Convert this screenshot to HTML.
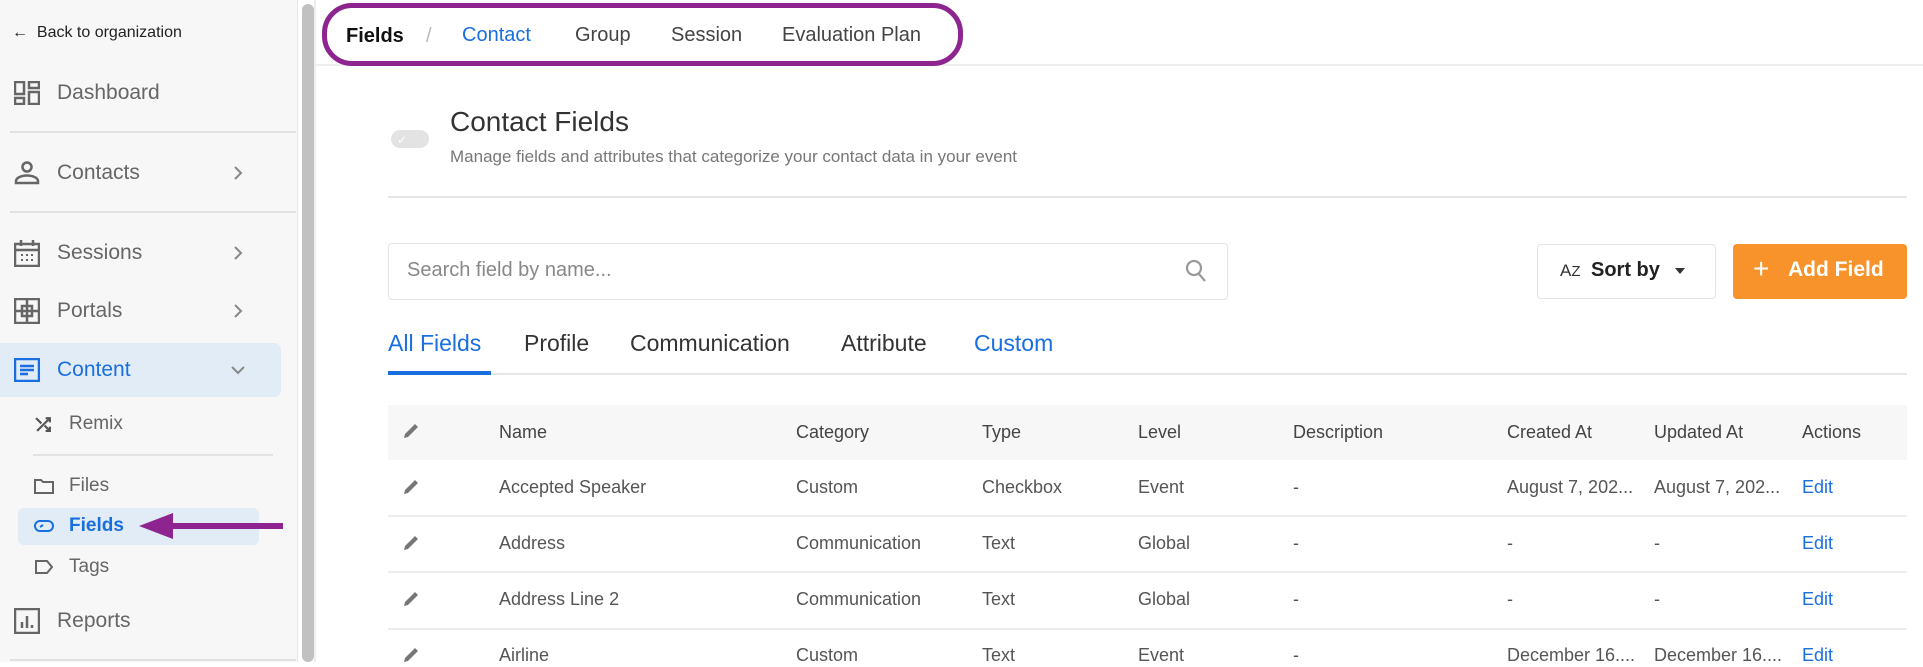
<!DOCTYPE html>
<html><head><meta charset="utf-8"><style>
*{margin:0;padding:0;box-sizing:border-box}
body{width:1923px;height:662px;overflow:hidden;background:#fff;font-family:"Liberation Sans",sans-serif;position:relative;color:#444}
.a{position:absolute;white-space:nowrap;line-height:24px}
.side{position:absolute;left:0;top:0;width:298px;height:662px;background:#f7f7f7;border-right:1px solid #e6e6e6}
.nav{font-size:21px;color:#666}
.sub{font-size:19px;color:#666}
.hr{position:absolute;height:2px;background:#e2e2e2}
.th{font-size:18px;color:#444}
.td{font-size:18px;color:#555}
.ed{font-size:18px;color:#1a6fe0}
.rl{position:absolute;left:388px;width:1519px;height:2px;background:#ececec}
.chev{position:absolute;left:233px}
svg{position:absolute}
</style></head><body>
<div class="side"></div>
<div style="position:absolute;left:302px;top:4px;width:12px;height:658px;background:#c1c1c1;border-radius:6px"></div>
<div style="position:absolute;left:314px;top:0;width:2px;height:662px;background:#eee"></div>

<div class="a" style="left:12px;top:21px;font-size:16px;color:#222">←&nbsp; Back to organization</div>

<svg style="left:14px;top:81px" width="26" height="24" viewBox="0 0 26 24" fill="none" stroke="#666" stroke-width="2.5"><rect x="1" y="1" width="9" height="12"/><rect x="1" y="17" width="9" height="6"/><rect x="15" y="1" width="10" height="6"/><rect x="15" y="11" width="10" height="12"/></svg>
<div class="a nav" style="left:57px;top:81px">Dashboard</div>
<div class="hr" style="left:10px;top:131px;width:286px"></div>

<svg style="left:14px;top:161px" width="26" height="24" viewBox="0 0 26 24" fill="none" stroke="#666" stroke-width="2.5"><circle cx="13" cy="6" r="4.5"/><path d="M2 22v-2c0-3 5-5.5 11-5.5s11 2.5 11 5.5v2z"/></svg>
<div class="a nav" style="left:57px;top:161px">Contacts</div>
<svg class="chev" style="top:165px" width="10" height="16" viewBox="0 0 10 16" fill="none" stroke="#888" stroke-width="2"><path d="M2 2l6 6-6 6"/></svg>
<div class="hr" style="left:10px;top:211px;width:286px"></div>

<svg style="left:14px;top:239px" width="26" height="28" viewBox="0 0 26 28" fill="none" stroke="#666" stroke-width="2.5"><rect x="1" y="5" width="24" height="22"/><path d="M7 1v6M19 1v6M1 11h24"/><path d="M7 16h2M12 16h2M17 16h2M7 21h2M12 21h2M17 21h2" stroke-width="2"/></svg>
<div class="a nav" style="left:57px;top:241px">Sessions</div>
<svg class="chev" style="top:245px" width="10" height="16" viewBox="0 0 10 16" fill="none" stroke="#888" stroke-width="2"><path d="M2 2l6 6-6 6"/></svg>

<svg style="left:14px;top:298px" width="26" height="26" viewBox="0 0 26 26" fill="none" stroke="#666" stroke-width="2.5"><rect x="1" y="1" width="24" height="24"/><path d="M13 1v24M1 13h24"/><rect x="8" y="8" width="10" height="10"/></svg>
<div class="a nav" style="left:57px;top:299px">Portals</div>
<svg class="chev" style="top:303px" width="10" height="16" viewBox="0 0 10 16" fill="none" stroke="#888" stroke-width="2"><path d="M2 2l6 6-6 6"/></svg>

<div style="position:absolute;left:0;top:343px;width:281px;height:54px;background:#e1ecf6;border-radius:0 7px 7px 0"></div>
<svg style="left:14px;top:358px" width="26" height="24" viewBox="0 0 26 24" fill="none" stroke="#1a6fe0" stroke-width="2.5"><rect x="1" y="1" width="24" height="22"/><path d="M6 8h14M6 12h14M6 16h8"/></svg>
<div class="a nav" style="left:57px;top:358px;color:#1a6fe0">Content</div>
<svg style="left:230px;top:365px" width="16" height="10" viewBox="0 0 16 10" fill="none" stroke="#888" stroke-width="2"><path d="M2 2l6 6 6-6"/></svg>

<svg style="left:35px;top:416px" width="17" height="17" viewBox="0 0 16 16" fill="none" stroke="#555" stroke-width="2"><path d="M1 2l5 5M10 2h4v4M14 2L2 14M9 9l5 5M14 10v4h-4"/></svg>
<div class="a sub" style="left:69px;top:412px">Remix</div>
<div class="hr" style="left:33px;top:454px;width:240px"></div>

<svg style="left:34px;top:478px" width="20" height="16" viewBox="0 0 20 16" fill="none" stroke="#666" stroke-width="2"><path d="M1 2h6l2 2h10v11H1z"/></svg>
<div class="a sub" style="left:69px;top:474px">Files</div>

<div style="position:absolute;left:18px;top:508px;width:241px;height:37px;background:#e1ecf6;border-radius:6px"></div>
<svg style="left:34px;top:520px" width="20" height="12" viewBox="0 0 20 12" fill="none" stroke="#1a6fe0" stroke-width="2"><rect x="1" y="1" width="18" height="10" rx="5"/><path d="M6 7l3-2"/></svg>
<div class="a sub" style="left:69px;top:514px;color:#1a6fe0;font-weight:bold">Fields</div>
<svg style="left:139px;top:511px" width="144" height="30" viewBox="0 0 144 30"><path d="M0 15L34 2v10h110v6H34v10z" fill="#8e2490"/></svg>

<svg style="left:35px;top:560px" width="18" height="14" viewBox="0 0 18 14" fill="none" stroke="#666" stroke-width="2"><path d="M1 1h11l5 6-5 6H1z"/></svg>
<div class="a sub" style="left:69px;top:555px">Tags</div>

<svg style="left:14px;top:608px" width="26" height="26" viewBox="0 0 26 26" fill="none" stroke="#666" stroke-width="2.5"><rect x="1" y="1" width="24" height="24"/><path d="M8 20v-6M13 20V8M18 20v-3"/></svg>
<div class="a nav" style="left:57px;top:609px">Reports</div>
<div class="hr" style="left:10px;top:659px;width:286px"></div>

<!-- top bar -->
<div style="position:absolute;left:316px;top:64px;width:1607px;height:2px;background:#eee"></div>
<div style="position:absolute;left:322px;top:3px;width:641px;height:63px;border:5px solid #8e2490;border-radius:30px"></div>
<div class="a" style="left:346px;top:24px;font-size:20px;font-weight:bold;color:#111">Fields</div>
<div class="a" style="left:426px;top:24px;font-size:20px;color:#bbb">/</div>
<div class="a" style="left:462px;top:23px;font-size:20px;color:#1a6fe0">Contact</div>
<div class="a" style="left:575px;top:23px;font-size:20px;color:#444">Group</div>
<div class="a" style="left:671px;top:23px;font-size:20px;color:#444">Session</div>
<div class="a" style="left:782px;top:23px;font-size:20px;color:#444">Evaluation Plan</div>

<div style="position:absolute;left:391px;top:130px;width:38px;height:18px;background:#e3e3e3;border-radius:9px"></div>
<div class="a" style="left:397px;top:128px;font-size:12px;color:#fff">✓</div>
<div class="a" style="left:450px;top:110px;font-size:28px;color:#333">Contact Fields</div>
<div class="a" style="left:450px;top:145px;font-size:17px;color:#777">Manage fields and attributes that categorize your contact data in your event</div>
<div style="position:absolute;left:388px;top:196px;width:1519px;height:2px;background:#e6e6e6"></div>

<div style="position:absolute;left:388px;top:243px;width:840px;height:57px;border:1.5px solid #e3e3e3;border-radius:4px"></div>
<div class="a" style="left:407px;top:258px;font-size:20px;color:#888">Search field by name...</div>
<svg style="left:1185px;top:259px" width="22" height="24" viewBox="0 0 22 24" fill="none" stroke="#999" stroke-width="2.2"><circle cx="9" cy="9" r="7"/><path d="M14 15l6 7"/></svg>

<div style="position:absolute;left:1537px;top:244px;width:179px;height:55px;border:1.5px solid #e3e3e3;border-radius:4px"></div>
<div class="a" style="left:1560px;top:259px;font-size:17px;color:#333">A<span style="font-size:15px">Z</span></div>
<div class="a" style="left:1591px;top:258px;font-size:20px;color:#222;font-weight:bold">Sort by</div>
<svg style="left:1675px;top:268px" width="10" height="6" viewBox="0 0 10 6"><path d="M0 0h10L5 6z" fill="#333"/></svg>
<div style="position:absolute;left:1733px;top:244px;width:174px;height:55px;background:#f7932a;border-radius:4px"></div>
<div class="a" style="left:1753px;top:257px;font-size:28px;color:#fff">+</div>
<div class="a" style="left:1788px;top:258px;font-size:21px;color:#fff;font-weight:bold">Add Field</div>

<div class="a" style="left:388px;top:331px;font-size:23px;color:#1a6fe0">All Fields</div>
<div class="a" style="left:524px;top:331px;font-size:23px;color:#333">Profile</div>
<div class="a" style="left:630px;top:331px;font-size:23px;color:#333">Communication</div>
<div class="a" style="left:841px;top:331px;font-size:23px;color:#333">Attribute</div>
<div class="a" style="left:974px;top:331px;font-size:23px;color:#1a6fe0">Custom</div>
<div style="position:absolute;left:388px;top:373px;width:1519px;height:2px;background:#e6e6e6"></div>
<div style="position:absolute;left:388px;top:371px;width:103px;height:4px;background:#1a6fe0"></div>

<div style="position:absolute;left:388px;top:405px;width:1519px;height:55px;background:#f7f7f7"></div>
<svg style="left:402px;top:422px" width="18" height="18" viewBox="0 0 18 18"><path d="M2 16l1-4L13 2l3 3L6 15z" fill="#777"/></svg>
<div class="a th" style="left:499px;top:420px">Name</div>
<div class="a th" style="left:796px;top:420px">Category</div>
<div class="a th" style="left:982px;top:420px">Type</div>
<div class="a th" style="left:1138px;top:420px">Level</div>
<div class="a th" style="left:1293px;top:420px">Description</div>
<div class="a th" style="left:1507px;top:420px">Created At</div>
<div class="a th" style="left:1654px;top:420px">Updated At</div>
<div class="a th" style="left:1802px;top:420px">Actions</div>

<svg style="left:402px;top:478px" width="18" height="18" viewBox="0 0 18 18"><path d="M2 16l1-4L13 2l3 3L6 15z" fill="#777"/></svg>
<div class="a td" style="left:499px;top:475px">Accepted Speaker</div>
<div class="a td" style="left:796px;top:475px">Custom</div>
<div class="a td" style="left:982px;top:475px">Checkbox</div>
<div class="a td" style="left:1138px;top:475px">Event</div>
<div class="a td" style="left:1293px;top:475px">-</div>
<div class="a td" style="left:1507px;top:475px">August 7, 202...</div>
<div class="a td" style="left:1654px;top:475px">August 7, 202...</div>
<div class="a ed" style="left:1802px;top:475px">Edit</div>
<div class="rl" style="top:515px"></div>

<svg style="left:402px;top:534px" width="18" height="18" viewBox="0 0 18 18"><path d="M2 16l1-4L13 2l3 3L6 15z" fill="#777"/></svg>
<div class="a td" style="left:499px;top:531px">Address</div>
<div class="a td" style="left:796px;top:531px">Communication</div>
<div class="a td" style="left:982px;top:531px">Text</div>
<div class="a td" style="left:1138px;top:531px">Global</div>
<div class="a td" style="left:1293px;top:531px">-</div>
<div class="a td" style="left:1507px;top:531px">-</div>
<div class="a td" style="left:1654px;top:531px">-</div>
<div class="a ed" style="left:1802px;top:531px">Edit</div>
<div class="rl" style="top:571px"></div>

<svg style="left:402px;top:590px" width="18" height="18" viewBox="0 0 18 18"><path d="M2 16l1-4L13 2l3 3L6 15z" fill="#777"/></svg>
<div class="a td" style="left:499px;top:587px">Address Line 2</div>
<div class="a td" style="left:796px;top:587px">Communication</div>
<div class="a td" style="left:982px;top:587px">Text</div>
<div class="a td" style="left:1138px;top:587px">Global</div>
<div class="a td" style="left:1293px;top:587px">-</div>
<div class="a td" style="left:1507px;top:587px">-</div>
<div class="a td" style="left:1654px;top:587px">-</div>
<div class="a ed" style="left:1802px;top:587px">Edit</div>
<div class="rl" style="top:628px"></div>

<svg style="left:402px;top:646px" width="18" height="18" viewBox="0 0 18 18"><path d="M2 16l1-4L13 2l3 3L6 15z" fill="#777"/></svg>
<div class="a td" style="left:499px;top:643px">Airline</div>
<div class="a td" style="left:796px;top:643px">Custom</div>
<div class="a td" style="left:982px;top:643px">Text</div>
<div class="a td" style="left:1138px;top:643px">Event</div>
<div class="a td" style="left:1293px;top:643px">-</div>
<div class="a td" style="left:1507px;top:643px">December 16....</div>
<div class="a td" style="left:1654px;top:643px">December 16....</div>
<div class="a ed" style="left:1802px;top:643px">Edit</div>
</body></html>
